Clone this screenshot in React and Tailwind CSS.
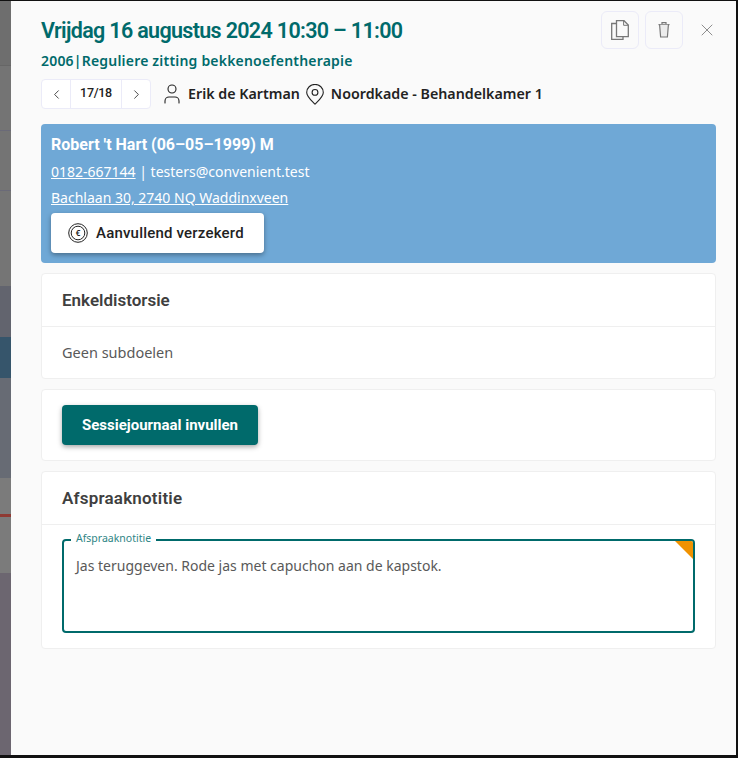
import { ChevronLeft, ChevronRight, User, X } from 'lucide-react';

const STRIPES = [
    'h-[64px] bg-[#6e6e6e]',
    'h-px bg-[#666]',
    'h-[64px] bg-[#747474]',
    'h-px bg-[#6a6a78]',
    'h-[59px] bg-[#747474]',
    'h-px bg-[#6a6a78]',
    'h-[95px] bg-[#757575]',
    'h-[51px] bg-[#62646e]',
    'h-[41px] bg-[#36556b]',
    'h-[100px] bg-[#676b74]',
    'h-[36px] bg-[#7b7b7b]',
    'h-[3px] bg-[#8f3a33]',
    'h-[56px] bg-[#7b7b7b]',
    'flex-1 bg-[#6c6670]',
];

function CopyIcon() {
    return (
        <svg width="18" height="20" viewBox="0 0 18 20" fill="none" stroke="#777" strokeWidth="1.3">
            <path d="M5 3.5H.7v15.8H12v-2.7" />
            <path d="M5.5.7H13l4.3 4.3v11.6H5.5z" />
            <path d="M12.6.7v4.6h4.7" strokeWidth="1" />
        </svg>
    );
}

function TrashIcon() {
    return (
        <svg width="12" height="16" viewBox="0 0 12 16" fill="none" stroke="#777" strokeWidth="1.2">
            <path d="M.5 2.6h11" />
            <path d="M4 2.4V.7h4v1.7" />
            <path d="M1.6 2.8 2.6 15h6.8l1-12.2" fill="#ececec" />
        </svg>
    );
}

function PinIcon() {
    return (
        <svg width="18" height="21" viewBox="0 0 18 21" fill="none" stroke="#222" strokeWidth="1.1">
            <path d="M9 20.2C4.600 15.600.7 12.400.7 8.400a8.300 8 0 0 1 16.600 0c0 4-3.900 7.200-8.300 11.800z" />
            <circle cx="9" cy="8.400" r="2.900" />
        </svg>
    );
}

function EuroCoin() {
    return (
        <svg width="20" height="20" viewBox="0 0 20 20" fill="none" stroke="#222" strokeWidth="1">
            <circle cx="10" cy="10" r="9.3" />
            <circle cx="10" cy="10" r="6.8" />
            <text x="10" y="13" textAnchor="middle" fontSize="8" fontWeight="600" fill="#222" stroke="none" fontFamily="Noto Sans">€</text>
        </svg>
    );
}

function Card({ children, className = '' }) {
    return <div className={`bg-white border border-[#efefef] rounded ${className}`}>{children}</div>;
}

export default function App() {
    return (
        <div className="h-[758px] w-[738px] bg-[#111] overflow-hidden pt-px pb-[3px] pr-[2px] font-['Noto_Sans',sans-serif]">
            <div className="h-full flex">
                <div className="w-[11px] flex flex-col">
                    {STRIPES.map((s, i) => <div key={i} className={s} />)}
                </div>

                <div className="flex-1 bg-[#fafafa] pl-[30px] pr-[20px] flex flex-col">
                    <div className="flex justify-between h-[41px] pt-[10px]">
                        <h1 className="mt-[2px] text-[21.5px] leading-[36px] font-semibold text-[#006a6b] tracking-[-0.67px] font-['Roboto',sans-serif]">
                            Vrijdag 16 augustus 2024 10:30 – 11:00
                        </h1>
                        <div className="flex items-start gap-[6px] -mr-[9px]">
                            <button className="w-[38px] h-[38px] rounded-md border border-[#ebebf8] flex items-center justify-center">
                                <CopyIcon />
                            </button>
                            <button className="w-[38px] h-[38px] rounded-md border border-[#ebebf8] flex items-center justify-center">
                                <TrashIcon />
                            </button>
                            <button className="w-[36px] h-[38px] flex items-center justify-center text-[#777]">
                                <X size={20} strokeWidth={1} />
                            </button>
                        </div>
                    </div>

                    <div className="mt-[9px] h-[20px] text-[14px] leading-[20px] tracking-[0.2px] font-semibold text-[#006a6b]">
                        2006|Reguliere zitting bekkenoefentherapie
                    </div>

                    <div className="mt-[8px] flex items-center h-[30px]">
                        <div className="flex h-[30px] bg-white border border-[#ebebf8] rounded text-[#222]">
                            <span className="w-[29px] flex items-center justify-center border-r border-[#ebebf8]">
                                <ChevronLeft size={15} strokeWidth={1.3} />
                            </span>
                            <span className="w-[51px] text-center text-[12.5px] tracking-[-0.3px] leading-[25px] font-medium font-['Roboto',sans-serif] border-r border-[#ebebf8]">17/18</span>
                            <span className="w-[28px] flex items-center justify-center">
                                <ChevronRight size={15} strokeWidth={1.3} />
                            </span>
                        </div>
                        <User size={24} strokeWidth={1.1} className="ml-[9px] text-[#222]" />
                        <span className="ml-[4px] text-[14.25px] font-semibold text-[#222]">Erik de Kartman</span>
                        <span className="ml-[6px]"><PinIcon /></span>
                        <span className="ml-[7px] text-[14.25px] font-semibold text-[#222]">Noordkade - Behandelkamer 1</span>
                    </div>

                    <div className="mt-[15px] h-[139px] bg-[#6fa8d6] rounded pl-[10px] pt-[9px] text-white">
                        <div className="text-[16px] leading-[24px] font-bold font-['Roboto',sans-serif]">Robert 't Hart (06–05–1999) M</div>
                        <div className="mt-[4px] text-[14px] leading-[22px]">
                            <span className="underline">0182-667144</span> | testers@convenient.test
                        </div>
                        <div className="mt-[4px] text-[14px] leading-[22px] underline">Bachlaan 30, 2740 NQ Waddinxveen</div>
                        <button className="mt-[4px] w-[213px] h-[40px] bg-white rounded shadow-[0_2px_5px_rgba(0,0,0,0.35)] flex items-center pl-[17px] gap-[8px] text-[#222]">
                            <EuroCoin />
                            <span className="text-[15px] tracking-[0.2px] font-medium font-['Roboto',sans-serif]">Aanvullend verzekerd</span>
                        </button>
                    </div>

                    <Card className="mt-[10px] h-[106px]">
                        <div className="h-[53px] pt-[2px] border-b border-[#efefef] pl-[20px] flex items-center text-[17px] font-semibold text-[#3f3f3f] font-['Roboto',sans-serif]">Enkeldistorsie</div>
                        <div className="pl-[20px] h-[52px] flex items-center text-[14.5px] text-[#595959]">Geen subdoelen</div>
                    </Card>

                    <Card className="mt-[10px] h-[72px] pl-[20px] pt-[15px]">
                        <button className="w-[196px] h-[40px] bg-[#006a6b] rounded text-white text-[15px] font-bold font-['Roboto',sans-serif] shadow-[0_2px_5px_rgba(0,0,0,0.35)]">
                            Sessiejournaal invullen
                        </button>
                    </Card>

                    <Card className="mt-[10px] h-[178px]">
                        <div className="h-[53px] pt-[2px] border-b border-[#efefef] pl-[20px] flex items-center text-[17px] tracking-[0.2px] font-semibold text-[#3f3f3f] font-['Roboto',sans-serif]">Afspraaknotitie</div>
                        <div className="relative mx-[20px] mt-[14px] h-[94px] border-2 border-[#006a6b] rounded overflow-hidden pl-[12px] pt-[15px] text-[14px] leading-[20px] text-[#595959]">
                            Jas teruggeven. Rode jas met capuchon aan de kapstok.
                            <span className="absolute top-0 right-0 w-0 h-0 border-t-[18px] border-l-[18px] border-t-[#f09200] border-l-transparent" />
                        </div>
                        <span className="relative block w-fit -mt-[102px] ml-[29px] bg-white px-[5px] text-[10.5px] leading-[14px] text-[#2e8585]">Afspraaknotitie</span>
                    </Card>
                </div>
            </div>
        </div>
    );
}
